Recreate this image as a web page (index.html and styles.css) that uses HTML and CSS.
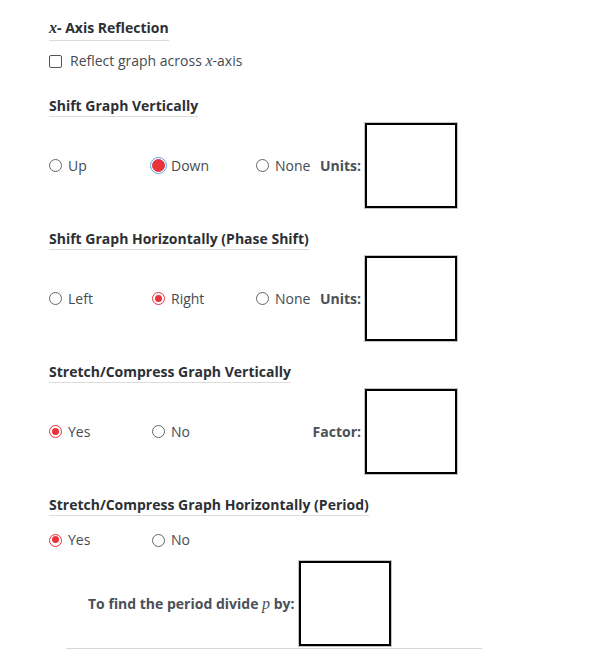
FILE: index.html
```html
<!DOCTYPE html>
<html>
<head>
<meta charset="utf-8">
<link rel="stylesheet" href="styles.css">
</head>
<body>
<div class="page">
  <div class="section first">
    <div class="heading"><span class="math">x</span>- Axis Reflection</div>
    <label class="check-row"><span class="checkbox"></span><span>Reflect graph across <span class="math">x</span>-axis</span></label>
  </div>

  <div class="section second">
    <div class="heading">Shift Graph Vertically</div>
    <div class="opt-row">
      <div class="opt"><span class="radio"></span>Up</div>
      <div class="opt"><span class="radio focus"></span>Down</div>
      <div class="opt"><span class="radio"></span>None</div>
      <div class="lbl">Units:</div>
      <div class="box"></div>
    </div>
  </div>

  <div class="section">
    <div class="heading">Shift Graph Horizontally (Phase Shift)</div>
    <div class="opt-row">
      <div class="opt"><span class="radio"></span>Left</div>
      <div class="opt"><span class="radio on"></span>Right</div>
      <div class="opt"><span class="radio"></span>None</div>
      <div class="lbl">Units:</div>
      <div class="box"></div>
    </div>
  </div>

  <div class="section">
    <div class="heading">Stretch/Compress Graph Vertically</div>
    <div class="opt-row">
      <div class="opt"><span class="radio on"></span>Yes</div>
      <div class="opt"><span class="radio"></span>No</div>
      <div class="opt"></div>
      <div class="lbl">Factor:</div>
      <div class="box"></div>
    </div>
  </div>

  <div class="section">
    <div class="heading">Stretch/Compress Graph Horizontally (Period)</div>
    <div class="opt-row short">
      <div class="opt"><span class="radio on"></span>Yes</div>
      <div class="opt"><span class="radio"></span>No</div>
    </div>
    <div class="period-row">
      <div class="lbl">To find the period divide <span class="math">p</span> by:</div>
      <div class="box"></div>
    </div>
  </div>
  <div class="rule"></div>
</div>
</body>
</html>
```
FILE: styles.css
```css
html, body {
  margin: 0;
  padding: 0;
  background: #fff;
}
.page {
  padding: 18px 0 0 49px;
  font-family: "Open Sans", "Liberation Sans", sans-serif;
  font-size: 14px;
  color: #454b52;
}
.section {
  margin-top: 21px;
}
.section.first {
  margin-top: 0;
}
.section.second {
  margin-top: 25px;
}
.heading {
  display: block;
  width: fit-content;
  font-weight: 700;
  font-size: 14px;
  line-height: 20px;
  height: 20px;
  color: #2c3035;
  border-bottom: 1px solid #dcdcdc;
}
.first .heading {
  padding-bottom: 2px;
}
.math {
  font-family: "Liberation Serif", "DejaVu Serif", serif;
  font-style: italic;
  font-size: 16px;
  font-weight: 400;
  line-height: 1;
}
.heading .math {
  font-weight: 700;
}
.check-row {
  display: flex;
  align-items: center;
  gap: 8px;
  margin-top: 10px;
  height: 20px;
  line-height: 20px;
}
.checkbox {
  width: 11px;
  height: 11px;
  border: 1px solid #555;
  border-radius: 2px;
  background: #fff;
  flex: none;
}
.opt-row {
  display: grid;
  grid-template-columns: 103px 104px 56px 53px 92px;
  align-items: center;
  margin-top: 6px;
  height: 85px;
}
.opt-row.short {
  height: 20px;
  margin-top: 14px;
}
.opt {
  display: flex;
  align-items: center;
  gap: 6px;
  line-height: 20px;
  white-space: nowrap;
}
.radio {
  box-sizing: border-box;
  width: 13px;
  height: 13px;
  border: 1px solid #666;
  border-radius: 50%;
  background: #fff;
  position: relative;
  flex: none;
}
.radio.on {
  border: 1.5px solid #e8323c;
}
.radio.on::after {
  content: "";
  position: absolute;
  left: 1.5px;
  top: 1.5px;
  width: 7px;
  height: 7px;
  border-radius: 50%;
  background: #e8323c;
}
.radio.focus {
  border: 1px solid #e8323c;
  background: #e8323c;
  box-shadow: 0 0 0 1px #fff;
  outline: 1px solid #5aa6e6;
  outline-offset: 1px;
}
.lbl {
  font-weight: 700;
  color: #4a5058;
  text-align: right;
  white-space: nowrap;
  padding-right: 4px;
  line-height: 20px;
}
.box {
  box-sizing: border-box;
  width: 92px;
  height: 85px;
  border: 2px solid #000;
  box-shadow: 0 0 0 1px #c4c4c4;
  background: #fff;
}
.period-row {
  display: flex;
  align-items: center;
  margin-top: 11px;
  padding-left: 39px;
}
.rule {
  margin: 2px 0 0 17px;
  width: 416px;
  border-top: 1px solid #d8d8d8;
}
```
